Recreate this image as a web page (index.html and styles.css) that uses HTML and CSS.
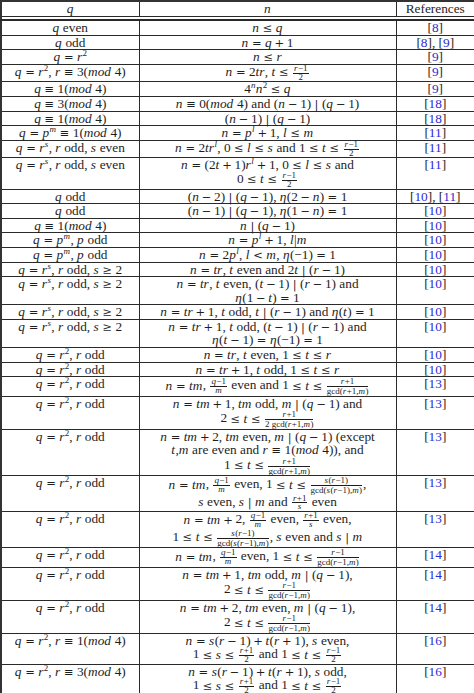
FILE: index.html
```html
<!DOCTYPE html>
<html>
<head>
<meta charset="utf-8">
<link rel="stylesheet" href="styles.css">
</head>
<body>
<table class="tbl">
<colgroup><col class="c1"><col class="c2"><col class="c3"></colgroup>
<thead>
<tr><th><i>q</i></th><th><i>n</i></th><th>References</th></tr>
<tr class="gap"><td colspan="3"></td></tr>
</thead>
<tbody>
<tr><td><i>q</i> even</td><td><i>n</i><span class="r">≤</span><i>q</i></td><td>[<a>8</a>]</td></tr>
<tr><td><i>q</i> odd</td><td><i>n</i><span class="r">=</span><i>q</i><span class="o">+</span>1</td><td>[<a>8</a>], [<a>9</a>]</td></tr>
<tr><td><i>q</i><span class="r">=</span><i>r</i><sup>2</sup></td><td><i>n</i><span class="r">≤</span><i>r</i></td><td>[<a>9</a>]</td></tr>
<tr><td><i>q</i><span class="r">=</span><i>r</i><sup>2</sup>, <i>r</i><span class="r">≡</span>3(<i>mod</i> 4)</td><td><i>n</i><span class="r">=</span>2<i>tr</i>, <i>t</i><span class="r">≤</span><span class="fr"><span><i>r</i>−1</span><span>2</span></span></td><td>[<a>9</a>]</td></tr>
<tr><td><i>q</i><span class="r">≡</span>1(<i>mod</i> 4)</td><td>4<sup><i>n</i></sup><i>n</i><sup>2</sup><span class="r">≤</span><i>q</i></td><td>[<a>9</a>]</td></tr>
<tr><td><i>q</i><span class="r">≡</span>3(<i>mod</i> 4)</td><td><i>n</i><span class="r">≡</span>0(<i>mod</i> 4) and (<i>n</i><span class="o">−</span>1)<span class="r">|</span>(<i>q</i><span class="o">−</span>1)</td><td>[<a>18</a>]</td></tr>
<tr><td><i>q</i><span class="r">≡</span>1(<i>mod</i> 4)</td><td>(<i>n</i><span class="o">−</span>1)<span class="r">|</span>(<i>q</i><span class="o">−</span>1)</td><td>[<a>18</a>]</td></tr>
<tr><td><i>q</i><span class="r">=</span><i>p</i><sup><i>m</i></sup><span class="r">≡</span>1(<i>mod</i> 4)</td><td><i>n</i><span class="r">=</span><i>p</i><sup><i>l</i></sup><span class="o">+</span>1, <i>l</i><span class="r">≤</span><i>m</i></td><td>[<a>11</a>]</td></tr>
<tr><td><i>q</i><span class="r">=</span><i>r</i><sup><i>s</i></sup>, <i>r</i> odd, <i>s</i> even</td><td><i>n</i><span class="r">=</span>2<i>tr</i><sup><i>l</i></sup>, 0<span class="r">≤</span><i>l</i><span class="r">≤</span><i>s</i> and 1<span class="r">≤</span><i>t</i><span class="r">≤</span><span class="fr"><span><i>r</i>−1</span><span>2</span></span></td><td>[<a>11</a>]</td></tr>
<tr><td><i>q</i><span class="r">=</span><i>r</i><sup><i>s</i></sup>, <i>r</i> odd, <i>s</i> even</td><td><i>n</i><span class="r">=</span>(2<i>t</i><span class="o">+</span>1)<i>r</i><sup><i>l</i></sup><span class="o">+</span>1, 0<span class="r">≤</span><i>l</i><span class="r">≤</span><i>s</i> and<br>0<span class="r">≤</span><i>t</i><span class="r">≤</span><span class="fr"><span><i>r</i>−1</span><span>2</span></span></td><td>[<a>11</a>]</td></tr>
<tr><td><i>q</i> odd</td><td>(<i>n</i><span class="o">−</span>2)<span class="r">|</span>(<i>q</i><span class="o">−</span>1), <i>η</i>(2<span class="o">−</span><i>n</i>)<span class="r">=</span>1</td><td>[<a>10</a>], [<a>11</a>]</td></tr>
<tr><td><i>q</i> odd</td><td>(<i>n</i><span class="o">−</span>1)<span class="r">|</span>(<i>q</i><span class="o">−</span>1), <i>η</i>(1<span class="o">−</span><i>n</i>)<span class="r">=</span>1</td><td>[<a>10</a>]</td></tr>
<tr><td><i>q</i><span class="r">≡</span>1(<i>mod</i> 4)</td><td><i>n</i><span class="r">|</span>(<i>q</i><span class="o">−</span>1)</td><td>[<a>10</a>]</td></tr>
<tr><td><i>q</i><span class="r">=</span><i>p</i><sup><i>m</i></sup>, <i>p</i> odd</td><td><i>n</i><span class="r">=</span><i>p</i><sup><i>l</i></sup><span class="o">+</span>1, <i>l</i>|<i>m</i></td><td>[<a>10</a>]</td></tr>
<tr><td><i>q</i><span class="r">=</span><i>p</i><sup><i>m</i></sup>, <i>p</i> odd</td><td><i>n</i><span class="r">=</span>2<i>p</i><sup><i>l</i></sup>, <i>l</i><span class="r">&lt;</span><i>m</i>, <i>η</i>(−1)<span class="r">=</span>1</td><td>[<a>10</a>]</td></tr>
<tr><td><i>q</i><span class="r">=</span><i>r</i><sup><i>s</i></sup>, <i>r</i> odd, <i>s</i><span class="r">≥</span>2</td><td><i>n</i><span class="r">=</span><i>tr</i>, <i>t</i> even and 2<i>t</i><span class="r">|</span>(<i>r</i><span class="o">−</span>1)</td><td>[<a>10</a>]</td></tr>
<tr><td><i>q</i><span class="r">=</span><i>r</i><sup><i>s</i></sup>, <i>r</i> odd, <i>s</i><span class="r">≥</span>2</td><td><i>n</i><span class="r">=</span><i>tr</i>, <i>t</i> even, (<i>t</i><span class="o">−</span>1)<span class="r">|</span>(<i>r</i><span class="o">−</span>1) and<br><i>η</i>(1<span class="o">−</span><i>t</i>)<span class="r">=</span>1</td><td>[<a>10</a>]</td></tr>
<tr><td><i>q</i><span class="r">=</span><i>r</i><sup><i>s</i></sup>, <i>r</i> odd, <i>s</i><span class="r">≥</span>2</td><td><i>n</i><span class="r">=</span><i>tr</i><span class="o">+</span>1, <i>t</i> odd, <i>t</i><span class="r">|</span>(<i>r</i><span class="o">−</span>1) and <i>η</i>(<i>t</i>)<span class="r">=</span>1</td><td>[<a>10</a>]</td></tr>
<tr><td><i>q</i><span class="r">=</span><i>r</i><sup><i>s</i></sup>, <i>r</i> odd, <i>s</i><span class="r">≥</span>2</td><td><i>n</i><span class="r">=</span><i>tr</i><span class="o">+</span>1, <i>t</i> odd, (<i>t</i><span class="o">−</span>1)<span class="r">|</span>(<i>r</i><span class="o">−</span>1) and<br><i>η</i>(<i>t</i><span class="o">−</span>1)<span class="r">=</span><i>η</i>(−1)<span class="r">=</span>1</td><td>[<a>10</a>]</td></tr>
<tr><td><i>q</i><span class="r">=</span><i>r</i><sup>2</sup>, <i>r</i> odd</td><td><i>n</i><span class="r">=</span><i>tr</i>, <i>t</i> even, 1<span class="r">≤</span><i>t</i><span class="r">≤</span><i>r</i></td><td>[<a>10</a>]</td></tr>
<tr><td><i>q</i><span class="r">=</span><i>r</i><sup>2</sup>, <i>r</i> odd</td><td><i>n</i><span class="r">=</span><i>tr</i><span class="o">+</span>1, <i>t</i> odd, 1<span class="r">≤</span><i>t</i><span class="r">≤</span><i>r</i></td><td>[<a>10</a>]</td></tr>
<tr><td><i>q</i><span class="r">=</span><i>r</i><sup>2</sup>, <i>r</i> odd</td><td><i>n</i><span class="r">=</span><i>tm</i>, <span class="fr"><span><i>q</i>−1</span><span><i>m</i></span></span> even and 1<span class="r">≤</span><i>t</i><span class="r">≤</span><span class="fr g"><span><i>r</i>+1</span><span>gcd(<i>r</i>+1,<i>m</i>)</span></span></td><td>[<a>13</a>]</td></tr>
<tr><td><i>q</i><span class="r">=</span><i>r</i><sup>2</sup>, <i>r</i> odd</td><td><i>n</i><span class="r">=</span><i>tm</i><span class="o">+</span>1, <i>tm</i> odd, <i>m</i><span class="r">|</span>(<i>q</i><span class="o">−</span>1) and<br>2<span class="r">≤</span><i>t</i><span class="r">≤</span><span class="fr g"><span><i>r</i>+1</span><span>2 gcd(<i>r</i>+1,<i>m</i>)</span></span></td><td>[<a>13</a>]</td></tr>
<tr><td><i>q</i><span class="r">=</span><i>r</i><sup>2</sup>, <i>r</i> odd</td><td><i>n</i><span class="r">=</span><i>tm</i><span class="o">+</span>2, <i>tm</i> even, <i>m</i><span class="r">|</span>(<i>q</i><span class="o">−</span>1) (except<br><i>t</i>,<i>m</i> are even and <i>r</i><span class="r">≡</span>1(<i>mod</i> 4)), and<br>1<span class="r">≤</span><i>t</i><span class="r">≤</span><span class="fr g"><span><i>r</i>+1</span><span>gcd(<i>r</i>+1,<i>m</i>)</span></span></td><td>[<a>13</a>]</td></tr>
<tr><td><i>q</i><span class="r">=</span><i>r</i><sup>2</sup>, <i>r</i> odd</td><td><i>n</i><span class="r">=</span><i>tm</i>, <span class="fr"><span><i>q</i>−1</span><span><i>m</i></span></span> even, 1<span class="r">≤</span><i>t</i><span class="r">≤</span><span class="fr g"><span><i>s</i>(<i>r</i>−1)</span><span>gcd(<i>s</i>(<i>r</i>−1),<i>m</i>)</span></span>,<br><i>s</i> even, <i>s</i><span class="r">|</span><i>m</i> and <span class="fr"><span><i>r</i>+1</span><span><i>s</i></span></span> even</td><td>[<a>13</a>]</td></tr>
<tr><td><i>q</i><span class="r">=</span><i>r</i><sup>2</sup>, <i>r</i> odd</td><td><i>n</i><span class="r">=</span><i>tm</i><span class="o">+</span>2, <span class="fr"><span><i>q</i>−1</span><span><i>m</i></span></span> even, <span class="fr"><span><i>r</i>+1</span><span><i>s</i></span></span> even,<br>1<span class="r">≤</span><i>t</i><span class="r">≤</span><span class="fr g"><span><i>s</i>(<i>r</i>−1)</span><span>gcd(<i>s</i>(<i>r</i>−1),<i>m</i>)</span></span>, <i>s</i> even and <i>s</i><span class="r">|</span><i>m</i></td><td>[<a>13</a>]</td></tr>
<tr><td><i>q</i><span class="r">=</span><i>r</i><sup>2</sup>, <i>r</i> odd</td><td><i>n</i><span class="r">=</span><i>tm</i>, <span class="fr"><span><i>q</i>−1</span><span><i>m</i></span></span> even, 1<span class="r">≤</span><i>t</i><span class="r">≤</span><span class="fr g"><span><i>r</i>−1</span><span>gcd(<i>r</i>−1,<i>m</i>)</span></span></td><td>[<a>14</a>]</td></tr>
<tr><td><i>q</i><span class="r">=</span><i>r</i><sup>2</sup>, <i>r</i> odd</td><td><i>n</i><span class="r">=</span><i>tm</i><span class="o">+</span>1, <i>tm</i> odd, <i>m</i><span class="r">|</span>(<i>q</i><span class="o">−</span>1),<br>2<span class="r">≤</span><i>t</i><span class="r">≤</span><span class="fr g"><span><i>r</i>−1</span><span>gcd(<i>r</i>−1,<i>m</i>)</span></span></td><td>[<a>14</a>]</td></tr>
<tr><td><i>q</i><span class="r">=</span><i>r</i><sup>2</sup>, <i>r</i> odd</td><td><i>n</i><span class="r">=</span><i>tm</i><span class="o">+</span>2, <i>tm</i> even, <i>m</i><span class="r">|</span>(<i>q</i><span class="o">−</span>1),<br>2<span class="r">≤</span><i>t</i><span class="r">≤</span><span class="fr g"><span><i>r</i>−1</span><span>gcd(<i>r</i>−1,<i>m</i>)</span></span></td><td>[<a>14</a>]</td></tr>
<tr><td><i>q</i><span class="r">=</span><i>r</i><sup>2</sup>, <i>r</i><span class="r">≡</span>1(<i>mod</i> 4)</td><td><i>n</i><span class="r">=</span><i>s</i>(<i>r</i><span class="o">−</span>1)<span class="o">+</span><i>t</i>(<i>r</i><span class="o">+</span>1), <i>s</i> even,<br>1<span class="r">≤</span><i>s</i><span class="r">≤</span><span class="fr"><span><i>r</i>+1</span><span>2</span></span> and 1<span class="r">≤</span><i>t</i><span class="r">≤</span><span class="fr"><span><i>r</i>−1</span><span>2</span></span></td><td>[<a>16</a>]</td></tr>
<tr><td><i>q</i><span class="r">=</span><i>r</i><sup>2</sup>, <i>r</i><span class="r">≡</span>3(<i>mod</i> 4)</td><td><i>n</i><span class="r">=</span><i>s</i>(<i>r</i><span class="o">−</span>1)<span class="o">+</span><i>t</i>(<i>r</i><span class="o">+</span>1), <i>s</i> odd,<br>1<span class="r">≤</span><i>s</i><span class="r">≤</span><span class="fr"><span><i>r</i>+1</span><span>2</span></span> and 1<span class="r">≤</span><i>t</i><span class="r">≤</span><span class="fr"><span><i>r</i>−1</span><span>2</span></span></td><td>[<a>16</a>]</td></tr>
</tbody>
</table>
</body>
</html>
```
FILE: styles.css
```css
html, body {
  margin: 0;
  padding: 0;
  background: #ffffff;
}
body {
  font-family: "Liberation Serif", "Times New Roman", serif;
  font-size: 13.3px;
  color: #1e1e1e;
}
.tbl {
  width: 474px;
  border-collapse: collapse;
  table-layout: fixed;
  border: 2px solid #333;
}
.c1 { width: 138px; }
.c2 { width: 257px; }
.c3 { width: 79px; }
.tbl th,
.tbl td {
  border: 1px solid #2a2a2a;
  padding: 0 2px;
  text-align: center;
  vertical-align: top;
  font-weight: normal;
  line-height: 13.6px;
  white-space: nowrap;
}
.tbl th {
  height: 14px;
}
.tbl tr.gap td {
  height: 2px;
  padding: 0;
  border-top: 1px solid #2a2a2a;
  border-bottom: 2px solid #2a2a2a;
  border-left: 2px solid #333;
  border-right: 2px solid #333;
  line-height: 0;
}
.tbl i {
  font-style: italic;
  padding-right: 0.4px;
}
.tbl sup {
  font-size: 9px;
  line-height: 0;
  vertical-align: 5px;
}
.tbl a {
  color: #2b2bd9;
}
.r {
  font-family: "DejaVu Serif", serif;
  font-size: 11.5px;
  line-height: 0;
  margin: 0 3.4px;
}
.o {
  font-family: "DejaVu Serif", serif;
  font-size: 11.5px;
  line-height: 0;
  margin: 0 2.6px;
}
.fr {
  display: inline-flex;
  flex-direction: column;
  vertical-align: middle;
  font-size: 9px;
  line-height: 7.8px;
  text-align: center;
  margin: 0 1px;
}
.fr.g {
  line-height: 8.7px;
}
.fr > span:first-child {
  border-bottom: 0.7px solid #1e1e1e;
  padding: 0 1px;
}
```
